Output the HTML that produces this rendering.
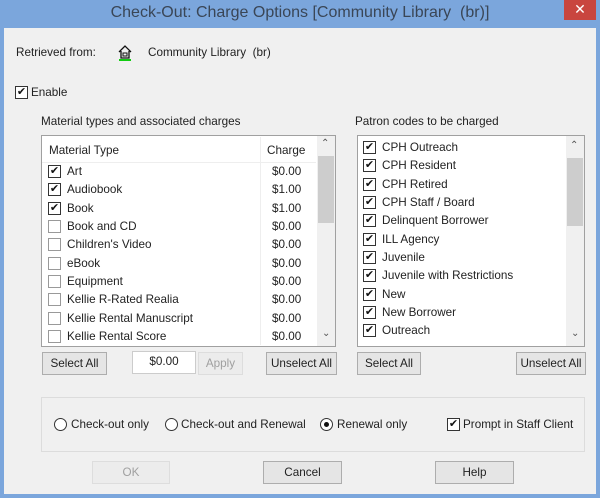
<!DOCTYPE html>
<html><head><style>
*{box-sizing:border-box;margin:0;padding:0}
body{width:600px;height:498px;overflow:hidden;background:#7ba6dc;font-family:"Liberation Sans",sans-serif;font-size:11.7px;color:#222;position:relative}
.a{position:absolute}
.client{left:4px;top:28px;width:592px;height:466px;background:#f0f0f0}
.title{left:0;top:4px;width:600px;text-align:center;font-size:16px;color:#3a4656}
.close{left:564px;top:0;width:32px;height:20px;background:#c9453f;color:#fff;text-align:center;font-size:14px;line-height:19px}
.cb{width:13px;height:13px;border:1px solid #333;background:#fff;font-size:11px;line-height:11px;text-align:center;color:#111}
.list{background:#fff;border:1px solid #a0a0a0}
.btn{border:1px solid #adadad;background:#e5e5e5;text-align:center;line-height:21px;height:23px}
.row{position:absolute;height:18px;line-height:18px;white-space:nowrap}
.sb{background:#f0f0f0}
.thumb{background:#cdcdcd}
.rad{width:13px;height:13px;border:1px solid #333;border-radius:50%;background:#fff}
</style></head><body>
<div class="a title">Check-Out: Charge Options [Community Library &nbsp;(br)]</div>
<div class="a close">✕</div>
<div class="a client"></div>

<div class="a" style="left:16px;top:46px">Retrieved from:</div>
<svg class="a" style="left:117px;top:44px" width="16" height="17" viewBox="0 0 16 17"><path d="M2 8 L8 2 L14 8 M4 7 V14 H12 V7" fill="none" stroke="#111" stroke-width="1.3"/><rect x="6" y="9" width="4" height="3" fill="none" stroke="#111"/><rect x="2" y="15" width="12" height="2" fill="#1c1"/></svg>
<div class="a" style="left:148px;top:46px">Community Library &nbsp;(br)</div>

<div class="a cb" style="left:15px;top:86px">✔</div>
<div class="a" style="left:31px;top:86px">Enable</div>

<div class="a" style="left:41px;top:115px">Material types and associated charges</div>
<div class="a" style="left:355px;top:115px">Patron codes to be charged</div>

<div class="a list" style="left:41px;top:135px;width:295px;height:212px">
 <div class="row" style="left:7px;top:6px">Material Type</div>
 <div class="row" style="left:225px;top:6px">Charge</div>
 <div class="a" style="left:218px;top:1px;width:1px;height:208px;background:#eee"></div>
 <div class="a" style="left:0;top:26px;width:274px;height:1px;background:#eee"></div>
 <div class="a sb" style="left:275px;top:0;width:18px;height:210px"></div>
 <div class="a thumb" style="left:276px;top:20px;width:16px;height:67px"></div>
 <div class="a" style="left:279px;top:2px;font-size:10px;color:#555">⌃</div>
 <div class="a" style="left:280px;top:192px;font-size:10px;color:#555">⌄</div>
</div>

<div class="a list" style="left:357px;top:135px;width:228px;height:212px">
 <div class="a sb" style="left:208px;top:0;width:18px;height:210px"></div>
 <div class="a thumb" style="left:209px;top:22px;width:16px;height:68px"></div>
 <div class="a" style="left:212px;top:4px;font-size:10px;color:#555">⌃</div>
 <div class="a" style="left:213px;top:192px;font-size:10px;color:#555">⌄</div>
</div>

<div class="a btn" style="left:42px;top:352px;width:65px">Select All</div>
<div class="a" style="left:132px;top:351px;width:64px;height:23px;background:#fff;border:1px solid #ccc;text-align:center;line-height:20px">$0.00</div>
<div class="a btn" style="left:198px;top:352px;width:45px;color:#a0a0a0;background:#ececec;border-color:#ddd">Apply</div>
<div class="a btn" style="left:266px;top:352px;width:71px">Unselect All</div>
<div class="a btn" style="left:357px;top:352px;width:64px">Select All</div>
<div class="a btn" style="left:516px;top:352px;width:70px">Unselect All</div>

<div class="a" style="left:41px;top:397px;width:544px;height:55px;border:1px solid #dcdcdc"></div>
<div class="a rad" style="left:54px;top:418px"></div>
<div class="a" style="left:71px;top:418px">Check-out only</div>
<div class="a rad" style="left:165px;top:418px"></div>
<div class="a" style="left:181px;top:418px">Check-out and Renewal</div>
<div class="a rad" style="left:320px;top:418px"><div class="a" style="left:3px;top:3px;width:5px;height:5px;border-radius:50%;background:#111"></div></div>
<div class="a" style="left:337px;top:418px">Renewal only</div>
<div class="a cb" style="left:447px;top:418px">✔</div>
<div class="a" style="left:463px;top:418px">Prompt in Staff Client</div>

<div class="a btn" style="left:92px;top:461px;width:78px;color:#a0a0a0;background:#ececec;border-color:#ddd">OK</div>
<div class="a btn" style="left:263px;top:461px;width:79px">Cancel</div>
<div class="a btn" style="left:435px;top:461px;width:79px">Help</div>

<div class="a" style="left:42px;top:163px">
 <div class="row" style="top:0"><span class="a cb" style="left:6px;top:2px">✔</span><span class="a" style="left:25px">Art</span><span class="a" style="left:230px">$0.00</span></div>
 <div class="row" style="top:18.3px"><span class="a cb" style="left:6px;top:2px">✔</span><span class="a" style="left:25px">Audiobook</span><span class="a" style="left:230px">$1.00</span></div>
 <div class="row" style="top:36.6px"><span class="a cb" style="left:6px;top:2px">✔</span><span class="a" style="left:25px">Book</span><span class="a" style="left:230px">$1.00</span></div>
 <div class="row" style="top:55px"><span class="a cb" style="left:6px;top:2px;border-color:#999"></span><span class="a" style="left:25px">Book and CD</span><span class="a" style="left:230px">$0.00</span></div>
 <div class="row" style="top:73.3px"><span class="a cb" style="left:6px;top:2px;border-color:#999"></span><span class="a" style="left:25px">Children's Video</span><span class="a" style="left:230px">$0.00</span></div>
 <div class="row" style="top:91.6px"><span class="a cb" style="left:6px;top:2px;border-color:#999"></span><span class="a" style="left:25px">eBook</span><span class="a" style="left:230px">$0.00</span></div>
 <div class="row" style="top:110px"><span class="a cb" style="left:6px;top:2px;border-color:#999"></span><span class="a" style="left:25px">Equipment</span><span class="a" style="left:230px">$0.00</span></div>
 <div class="row" style="top:128.3px"><span class="a cb" style="left:6px;top:2px;border-color:#999"></span><span class="a" style="left:25px">Kellie R-Rated Realia</span><span class="a" style="left:230px">$0.00</span></div>
 <div class="row" style="top:146.6px"><span class="a cb" style="left:6px;top:2px;border-color:#999"></span><span class="a" style="left:25px">Kellie Rental Manuscript</span><span class="a" style="left:230px">$0.00</span></div>
 <div class="row" style="top:165px"><span class="a cb" style="left:6px;top:2px;border-color:#999"></span><span class="a" style="left:25px">Kellie Rental Score</span><span class="a" style="left:230px">$0.00</span></div>
</div>

<div class="a" style="left:357px;top:139px">
 <div class="row" style="top:0"><span class="a cb" style="left:6px;top:2px">✔</span><span class="a" style="left:25px">CPH Outreach</span></div>
 <div class="row" style="top:18.3px"><span class="a cb" style="left:6px;top:2px">✔</span><span class="a" style="left:25px">CPH Resident</span></div>
 <div class="row" style="top:36.6px"><span class="a cb" style="left:6px;top:2px">✔</span><span class="a" style="left:25px">CPH Retired</span></div>
 <div class="row" style="top:55px"><span class="a cb" style="left:6px;top:2px">✔</span><span class="a" style="left:25px">CPH Staff / Board</span></div>
 <div class="row" style="top:73.3px"><span class="a cb" style="left:6px;top:2px">✔</span><span class="a" style="left:25px">Delinquent Borrower</span></div>
 <div class="row" style="top:91.6px"><span class="a cb" style="left:6px;top:2px">✔</span><span class="a" style="left:25px">ILL Agency</span></div>
 <div class="row" style="top:110px"><span class="a cb" style="left:6px;top:2px">✔</span><span class="a" style="left:25px">Juvenile</span></div>
 <div class="row" style="top:128.3px"><span class="a cb" style="left:6px;top:2px">✔</span><span class="a" style="left:25px">Juvenile with Restrictions</span></div>
 <div class="row" style="top:146.6px"><span class="a cb" style="left:6px;top:2px">✔</span><span class="a" style="left:25px">New</span></div>
 <div class="row" style="top:165px"><span class="a cb" style="left:6px;top:2px">✔</span><span class="a" style="left:25px">New Borrower</span></div>
 <div class="row" style="top:183.3px"><span class="a cb" style="left:6px;top:2px">✔</span><span class="a" style="left:25px">Outreach</span></div>
</div>
</body></html>
